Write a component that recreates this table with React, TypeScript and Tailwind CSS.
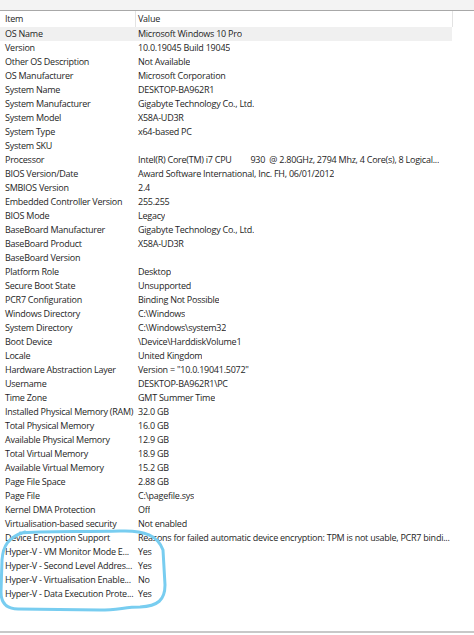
const ROWS: [string, string][] = [
  ["OS Name", "Microsoft Windows 10 Pro"],
  ["Version", "10.0.19045 Build 19045"],
  ["Other OS Description", "Not Available"],
  ["OS Manufacturer", "Microsoft Corporation"],
  ["System Name", "DESKTOP-BA962R1"],
  ["System Manufacturer", "Gigabyte Technology Co., Ltd."],
  ["System Model", "X58A-UD3R"],
  ["System Type", "x64-based PC"],
  ["System SKU", ""],
  ["Processor", "Intel(R) Core(TM) i7 CPU         930  @ 2.80GHz, 2794 Mhz, 4 Core(s), 8 Logical..."],
  ["BIOS Version/Date", "Award Software International, Inc. FH, 06/01/2012"],
  ["SMBIOS Version", "2.4"],
  ["Embedded Controller Version", "255.255"],
  ["BIOS Mode", "Legacy"],
  ["BaseBoard Manufacturer", "Gigabyte Technology Co., Ltd."],
  ["BaseBoard Product", "X58A-UD3R"],
  ["BaseBoard Version", ""],
  ["Platform Role", "Desktop"],
  ["Secure Boot State", "Unsupported"],
  ["PCR7 Configuration", "Binding Not Possible"],
  ["Windows Directory", "C:\\Windows"],
  ["System Directory", "C:\\Windows\\system32"],
  ["Boot Device", "\\Device\\HarddiskVolume1"],
  ["Locale", "United Kingdom"],
  ["Hardware Abstraction Layer", 'Version = "10.0.19041.5072"'],
  ["Username", "DESKTOP-BA962R1\\PC"],
  ["Time Zone", "GMT Summer Time"],
  ["Installed Physical Memory (RAM)", "32.0 GB"],
  ["Total Physical Memory", "16.0 GB"],
  ["Available Physical Memory", "12.9 GB"],
  ["Total Virtual Memory", "18.9 GB"],
  ["Available Virtual Memory", "15.2 GB"],
  ["Page File Space", "2.88 GB"],
  ["Page File", "C:\\pagefile.sys"],
  ["Kernel DMA Protection", "Off"],
  ["Virtualisation-based security", "Not enabled"],
  ["Device Encryption Support", "Reasons for failed automatic device encryption: TPM is not usable, PCR7 bindi..."],
  ["Hyper-V - VM Monitor Mode E...", "Yes"],
  ["Hyper-V - Second Level Addres...", "Yes"],
  ["Hyper-V - Virtualisation Enable...", "No"],
  ["Hyper-V - Data Execution Prote...", "Yes"],
];

export default function App() {
  return (
    <div className="relative h-[635px] w-[474px] overflow-hidden bg-white font-['Open_Sans',sans-serif] text-[9px] tracking-[-0.25px] text-[#1e1e1e]">
      <div className="h-[10px] bg-[#f3f3f3]" />
      <div className="h-px bg-[#a8a8a8]" />
      <div className="flex h-[16px] w-[453px] items-center border-r border-[#e3e3e3]">
        <div className="flex h-full w-[136px] items-center border-r border-[#e3e3e3] pl-[5px]">Item</div>
        <div className="pl-[2px]">Value</div>
      </div>
      <div className="flex flex-col">
        {ROWS.map(([k, v], i) => (
          <div
            key={k}
            className={
              i === 0
                ? "flex h-[14px] w-[452px] items-center bg-[#f0f0f0]"
                : "flex h-[14px] w-[452px] items-center"
            }
          >
            <div className="w-[136px] shrink-0 overflow-hidden whitespace-nowrap pl-[5px]">{k}</div>
            <div className="overflow-hidden whitespace-pre pl-[2px]">{v}</div>
          </div>
        ))}
      </div>
      <div className="h-[30px]" />
      <div className="h-[2px] bg-[#c8c8c8]" />

      {/* hand-drawn highlight loop */}
      <svg className="pointer-events-none absolute left-0 top-0" width="474" height="635">
        <path
          d="M 20 533 C 40 531, 80 532, 120 531 C 145 530, 158 536, 163 550 L 165 585 C 165 600, 158 606, 140 607 C 125 607, 118 610, 100 610 L 18 609 C 6 609, 1 603, 1 592 L 2 560 C 3 546, 8 537, 25 532"
          fill="none"
          stroke="#78cdf0"
          strokeWidth="3"
          strokeLinecap="round"
        />
      </svg>
    </div>
  );
}
